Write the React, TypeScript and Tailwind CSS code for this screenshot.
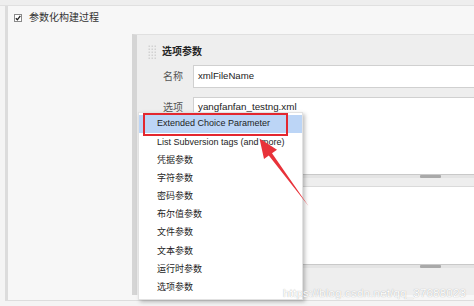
import React from "react";

const options = [
  "Extended Choice Parameter",
  "List Subversion tags (and more)",
  "凭据参数",
  "字符参数",
  "密码参数",
  "布尔值参数",
  "文件参数",
  "文本参数",
  "运行时参数",
  "选项参数",
];

function DragHandle() {
  // small dotted grip left of the section title
  const dots = [];
  for (let r = 0; r < 5; r++) {
    for (let c = 0; c < 3; c++) {
      dots.push(<rect key={`${r}-${c}`} x={c * 3 + 0.5} y={r * 3 + 0.5} width="1.5" height="1.5" fill="#d2d2d2" />);
    }
  }
  return (
    <svg width="9" height="14" viewBox="0 0 9 14">
      {dots}
    </svg>
  );
}

function ScrollStrip() {
  return (
    <div className="h-[4px] bg-[#e4e4e4] border-t border-[#c9c9c9] relative">
      <div className="absolute left-[227px] top-0 w-[21px] h-[3px] bg-[#a9a9a9] rounded-[1px]" />
    </div>
  );
}

export default function App() {
  return (
    <div className="relative w-[474px] h-[306px] overflow-hidden bg-[#f4f4f4] font-['Liberation_Sans','Noto_Sans_CJK_SC',sans-serif] text-[#333]">
      <div className="h-[6px] bg-[#eeeeee] border-b border-[#e0e0e0]" />
      <div className="ml-[5px] h-[295px] border-l-[3px] border-[#dcdcdc] border-b border-b-[#dddddd] bg-[#f7f7f7]">
        <div className="h-[24px] flex items-center pl-[6px] gap-[7px]">
          <div className="w-[8px] h-[8px] border border-[#8a8a8a] bg-white flex items-center justify-center">
            <svg width="6" height="6" viewBox="0 0 6 6">
              <path d="M0.8 3.2 L2.4 4.8 L5.3 0.9" stroke="#222" strokeWidth="1.3" fill="none" />
            </svg>
          </div>
          <span className="text-[10px] leading-none">参数化构建过程</span>
        </div>

        <div className="flex pl-[124px] pt-[4px]">
          <div className="flex-1 h-[261px] border-l-[5px] border-l-[#d5d5d5] border-t border-t-[#e0e0e0] bg-[#eeeeee]">
            <div className="h-[30px] flex items-center pl-[11px] gap-[5px] pt-[3px]">
              <DragHandle />
              <span className="text-[10px] font-bold text-[#222]">选项参数</span>
            </div>

            <div className="flex items-center h-[23px]">
              <div className="w-[56px] pr-[10px] text-right text-[10px] text-[#555]">名称</div>
              <div className="flex-1 h-full bg-white border border-[#d0d0d0] border-r-0 flex items-center pl-[4px] text-[9.6px] text-[#222]">
                xmlFileName
              </div>
            </div>

            <div className="flex mt-[9px]">
              <div className="w-[56px] pr-[10px] pt-[3px] text-right text-[10px] text-[#555]">选项</div>
              <div className="flex-1">
                <div className="h-[77px] bg-white border-t border-l border-[#d0d0d0] pl-[4px] pt-[2px] text-[9.8px] text-[#222]">
                  yangfanfan_testng.xml
                </div>
                <ScrollStrip />
                <div className="h-[9px] border-b border-[#dadada]" />
                <div className="h-[77px] bg-white border-l border-[#d0d0d0]" />
                <ScrollStrip />
              </div>
            </div>
          </div>
        </div>
      </div>

      {/* dropdown menu over the form */}
      <div className="absolute left-[138px] top-[112px] w-[165px] h-[188px] bg-white shadow-[2px_2px_4px_rgba(0,0,0,0.25)] border border-[#e2e2e2] pt-[2px]">
        {options.map((o, i) => (
          <div
            key={o}
            className={
              i === 0
                ? "h-[18.2px] flex items-center pl-[18px] text-[9px] text-[#1d1d1d] bg-[#bcd5f6]"
                : "h-[18.2px] flex items-center pl-[18px] text-[9px] text-[#1d1d1d]"
            }
          >
            {o}
          </div>
        ))}
      </div>

      <div className="absolute left-[143px] top-[113px] w-[145px] h-[23px] border-2 border-[#e3272f]" />

      <svg className="absolute left-0 top-0" width="474" height="306" viewBox="0 0 474 306">
        <polygon points="259.5,138.5 277,149.8 272,153.2 308.5,206 268.8,155.4 264,159" fill="#e8323a" />
      </svg>

      <div className="absolute left-[283px] top-[285px] text-[11.5px] text-white tracking-[0.2px] [text-shadow:0_0_1px_#9a9a9a]">
        https://blog.csdn.net/qq_37688023
      </div>
    </div>
  );
}
